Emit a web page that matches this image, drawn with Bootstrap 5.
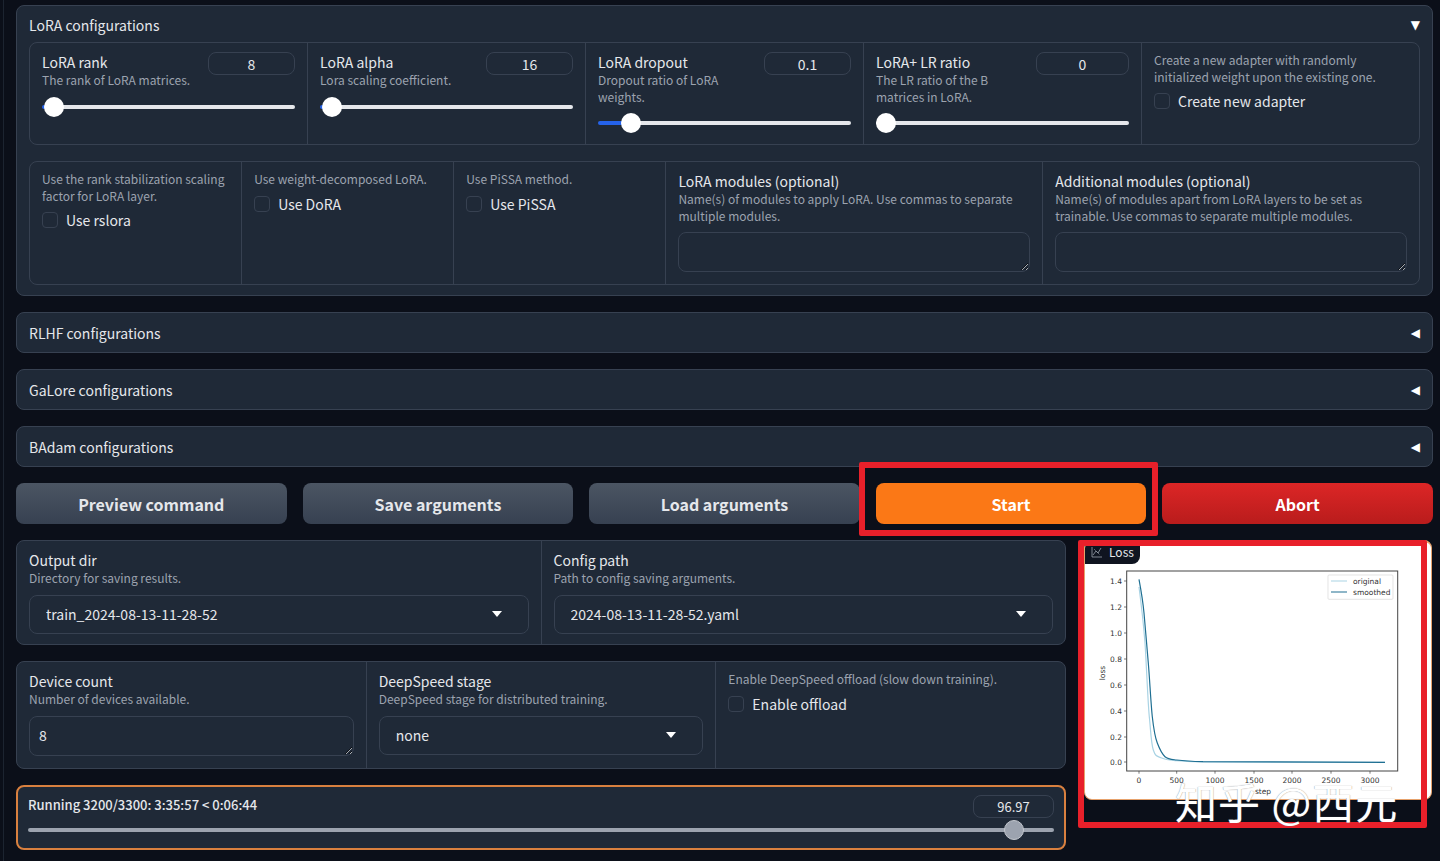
<!doctype html>
<html lang="en">
<head>
<meta charset="utf-8">
<title>LoRA training</title>
<link href="https://cdn.jsdelivr.net/npm/bootstrap@5.3.0/dist/css/bootstrap.min.css" rel="stylesheet">
<style>
html,body{height:861px;overflow:hidden}
body{background:#0b0f19;color:#e5e7eb;font-family:"Noto Sans CJK SC","Noto Sans",sans-serif;font-size:14px;line-height:20px}
.ui-shell{position:relative;height:861px;margin-left:3px;border-left:1px solid #1c2430;padding:5px 7px 0 12px;display:flex;flex-direction:column;gap:16px}
.ui-panel{background:#1f2937;border:1px solid #374151;border-radius:8px}
.ui-acc{padding:9px 12px 10px}
.ui-acc-head{display:flex;justify-content:space-between;align-items:center;height:20px;color:#e5e7eb}
.ui-acc-h40{height:41px;padding:10px 12px}
.ui-arrow{color:#fff;font-size:12px;line-height:20px;font-family:"DejaVu Sans",sans-serif}
.ui-grp{border:1px solid #374151;border-radius:8px;display:flex;overflow:hidden}
.ui-grp1{height:103px;margin-top:7px}
.ui-grp2{height:124px;margin-top:16px}
.ui-cell{flex:1 1 0;min-width:0;padding:9px 12px 0;border-left:1px solid #374151}
.ui-cell:first-child{border-left:0}
.ui-wide{flex:1.88 1 0}
.ui-lab{display:block;color:#e5e7eb;line-height:20px}
.ui-info{display:block;color:#9ca3af;font-size:12px;line-height:16.5px}
.ui-num{display:block;height:23px;background:transparent;border:1px solid #374151;border-radius:8px;color:#e5e7eb;font-size:14px;text-align:center;padding:0;box-shadow:none}
.ui-numw{width:87px;flex:none}
.ui-numw2{width:93px;flex:none}
.ui-range{display:block;width:100%;height:20px;margin:0;padding:0;background:transparent;-webkit-appearance:none;appearance:none}
.ui-range::-webkit-slider-runnable-track{height:4px;border-radius:2px;background:linear-gradient(90deg,#2563eb var(--f),#e5e7eb var(--f))}
.ui-range::-webkit-slider-thumb{-webkit-appearance:none;width:20px;height:20px;margin-top:-8px;border-radius:50%;background:#fff;border:0}
.ui-range-grey::-webkit-slider-runnable-track{background:#9ca3af}
.ui-range-grey::-webkit-slider-thumb{background:#9ca3af;border:1px solid #c3c7ce}
.ui-check{display:flex;align-items:center;gap:8px;color:#e5e7eb;margin-top:6px;line-height:20px}
.ui-check .form-check-input{width:16px;height:16px;margin:0;background-color:transparent;border:1px solid #374151;border-radius:4px;box-shadow:none}
.ui-text{background:#1f2937;border:1px solid #374151;border-radius:8px;color:#e5e7eb;font-size:14px;padding:8px 9px;box-shadow:none;height:40px;min-height:0}
.ui-text:focus{background:#1f2937;color:#e5e7eb;border-color:#374151;box-shadow:none}
.ui-sel{height:39px;background-color:#1f2937;border:1px solid #374151;border-radius:8px;color:#e5e7eb;font-size:14px;padding:0 40px 0 16px;box-shadow:none;background-size:10px 6px;background-position:right 26px center;background-image:url("data:image/svg+xml,%3Csvg xmlns='http://www.w3.org/2000/svg' viewBox='0 0 10 6'%3E%3Cpath fill='%23fff' d='M0 0h10L5 6z'/%3E%3C/svg%3E")}
.ui-btn{flex:1 1 0;height:41px;border:0;border-radius:8px;font-size:16px;font-weight:600;color:#e5e7eb;padding:0;background:linear-gradient(180deg,#4b5563,#374151)}
.ui-btn:hover{color:#e5e7eb;background:linear-gradient(180deg,#4b5563,#374151)}
.ui-btn-go{background:#fb7816;color:#fff}
.ui-btn-go:hover{background:#fb7816;color:#fff}
.ui-btn-stop{background:linear-gradient(180deg,#dc2626,#b91c1c);color:#fff}
.ui-btn-stop:hover{background:linear-gradient(180deg,#dc2626,#b91c1c);color:#fff}
.ui-left{width:1050px;flex:none;display:flex;flex-direction:column;gap:16px}
.ui-bottom{display:flex;gap:18px}
.ui-h105{height:105px}
.ui-h108{height:108px}
.ui-prog{height:65px;border:2px solid #d9803f;padding:6px 10px 0}
.ui-prog-title{font-size:13px;font-weight:500;line-height:24px;color:#e5e7eb}
.ui-prog-num{width:81px;height:23px;flex:none;font-size:13px;margin-top:2px}
.ui-prog-range{margin-top:2px}
.ui-plot{position:relative;width:348px;height:260px;background:#fff;border:1px solid #e7a26c;border-top-width:2px;border-radius:8px;overflow:hidden}
.ui-plot svg{display:block;position:absolute;left:-1px;top:-2px}
.ui-plottab{position:absolute;left:-1px;top:-2px;width:56px;height:24px;background:#0f1420;border-bottom-right-radius:8px;color:#e5e7eb;font-size:12px;line-height:24px;padding-left:25px}
.ui-plottab svg{left:7px;top:6px}
.ui-redbox{position:absolute;border:6px solid #e8202a;border-radius:2px;pointer-events:none}
.ui-red1{left:855px;top:462px;width:299px;height:74px}
.ui-red2{left:1074px;top:540px;width:349px;height:288px}
.ui-wm{position:absolute;left:1171px;top:775px;color:#fff;font-size:42px;line-height:52px;white-space:nowrap;font-family:"Noto Sans CJK SC",sans-serif;letter-spacing:1px;text-shadow:0 0 1px #777;pointer-events:none}
</style>
</head>
<body>
<div class="ui-shell">

  <section class="ui-panel ui-acc">
    <div class="ui-acc-head"><span>LoRA configurations</span><span class="ui-arrow">▼</span></div>
    <div class="ui-grp ui-grp1">
      <div class="ui-cell">
        <div class="d-flex justify-content-between align-items-start">
          <div><span class="ui-lab">LoRA rank</span><span class="ui-info">The rank of LoRA matrices.</span></div>
          <input class="form-control ui-num ui-numw" value="8" aria-label="LoRA rank">
        </div>
        <input type="range" class="ui-range mt-2" min="1" max="1024" value="8" style="--f:1%" aria-label="LoRA rank slider">
      </div>
      <div class="ui-cell">
        <div class="d-flex justify-content-between align-items-start">
          <div><span class="ui-lab">LoRA alpha</span><span class="ui-info">Lora scaling coefficient.</span></div>
          <input class="form-control ui-num ui-numw" value="16" aria-label="LoRA alpha">
        </div>
        <input type="range" class="ui-range mt-2" min="0" max="2048" value="16" style="--f:1%" aria-label="LoRA alpha slider">
      </div>
      <div class="ui-cell">
        <div class="d-flex justify-content-between align-items-start">
          <div><span class="ui-lab">LoRA dropout</span><span class="ui-info">Dropout ratio of LoRA weights.</span></div>
          <input class="form-control ui-num ui-numw" value="0.1" aria-label="LoRA dropout">
        </div>
        <input type="range" class="ui-range mt-2" min="0" max="1" step="0.01" value="0.1" style="--f:10%" aria-label="LoRA dropout slider">
      </div>
      <div class="ui-cell">
        <div class="d-flex justify-content-between align-items-start gap-1">
          <div><span class="ui-lab">LoRA+ LR ratio</span><span class="ui-info">The LR ratio of the B matrices in LoRA.</span></div>
          <input class="form-control ui-num ui-numw2" value="0" aria-label="LoRA+ LR ratio">
        </div>
        <input type="range" class="ui-range mt-2" min="0" max="64" value="0" style="--f:0%" aria-label="LoRA+ LR ratio slider">
      </div>
      <div class="ui-cell">
        <span class="ui-info">Create a new adapter with randomly initialized weight upon the existing one.</span>
        <label class="ui-check"><input class="form-check-input" type="checkbox">Create new adapter</label>
      </div>
    </div>
    <div class="ui-grp ui-grp2">
      <div class="ui-cell">
        <span class="ui-info">Use the rank stabilization scaling factor for LoRA layer.</span>
        <label class="ui-check"><input class="form-check-input" type="checkbox">Use rslora</label>
      </div>
      <div class="ui-cell">
        <span class="ui-info">Use weight-decomposed LoRA.</span>
        <label class="ui-check"><input class="form-check-input" type="checkbox">Use DoRA</label>
      </div>
      <div class="ui-cell">
        <span class="ui-info">Use PiSSA method.</span>
        <label class="ui-check"><input class="form-check-input" type="checkbox">Use PiSSA</label>
      </div>
      <div class="ui-cell ui-wide">
        <span class="ui-lab">LoRA modules (optional)</span>
        <span class="ui-info">Name(s) of modules to apply LoRA. Use commas to separate multiple modules.</span>
        <textarea class="form-control ui-text mt-2" aria-label="LoRA modules"></textarea>
      </div>
      <div class="ui-cell ui-wide">
        <span class="ui-lab">Additional modules (optional)</span>
        <span class="ui-info">Name(s) of modules apart from LoRA layers to be set as trainable. Use commas to separate multiple modules.</span>
        <textarea class="form-control ui-text mt-2" aria-label="Additional modules"></textarea>
      </div>
    </div>
  </section>

  <section class="ui-panel ui-acc-h40 ui-acc-head"><span>RLHF configurations</span><span class="ui-arrow">◀</span></section>
  <section class="ui-panel ui-acc-h40 ui-acc-head"><span>GaLore configurations</span><span class="ui-arrow">◀</span></section>
  <section class="ui-panel ui-acc-h40 ui-acc-head"><span>BAdam configurations</span><span class="ui-arrow">◀</span></section>

  <div class="d-flex gap-3">
    <button class="btn ui-btn" type="button">Preview command</button>
    <button class="btn ui-btn" type="button">Save arguments</button>
    <button class="btn ui-btn" type="button">Load arguments</button>
    <button class="btn ui-btn ui-btn-go" type="button">Start</button>
    <button class="btn ui-btn ui-btn-stop" type="button">Abort</button>
  </div>

  <div class="ui-bottom">
    <div class="ui-left">
      <div class="ui-panel ui-grp ui-h105">
        <div class="ui-cell">
          <span class="ui-lab">Output dir</span>
          <span class="ui-info">Directory for saving results.</span>
          <select class="form-select ui-sel mt-2" aria-label="Output dir"><option>train_2024-08-13-11-28-52</option></select>
        </div>
        <div class="ui-cell">
          <span class="ui-lab">Config path</span>
          <span class="ui-info">Path to config saving arguments.</span>
          <select class="form-select ui-sel mt-2" aria-label="Config path"><option>2024-08-13-11-28-52.yaml</option></select>
        </div>
      </div>
      <div class="ui-panel ui-grp ui-h108">
        <div class="ui-cell">
          <span class="ui-lab">Device count</span>
          <span class="ui-info">Number of devices available.</span>
          <textarea class="form-control ui-text mt-2" aria-label="Device count">8</textarea>
        </div>
        <div class="ui-cell">
          <span class="ui-lab">DeepSpeed stage</span>
          <span class="ui-info">DeepSpeed stage for distributed training.</span>
          <select class="form-select ui-sel mt-2" aria-label="DeepSpeed stage"><option>none</option></select>
        </div>
        <div class="ui-cell">
          <span class="ui-info">Enable DeepSpeed offload (slow down training).</span>
          <label class="ui-check"><input class="form-check-input" type="checkbox">Enable offload</label>
        </div>
      </div>
      <div class="ui-panel ui-prog">
        <div class="d-flex justify-content-between align-items-start">
          <span class="ui-prog-title">Running 3200/3300: 3:35:57 &lt; 0:06:44</span>
          <input class="form-control ui-num ui-prog-num" value="96.97" aria-label="Progress">
        </div>
        <input type="range" class="ui-range ui-range-grey ui-prog-range" min="0" max="100" step="0.01" value="96.97" aria-label="Progress slider">
      </div>
    </div>

    <div class="ui-plot">
      <svg width="348" height="260" viewBox="0 0 348 260" role="img" aria-label="Loss plot" font-family="DejaVu Sans, sans-serif" font-size="7.5" fill="#333">
        <rect x="42.7" y="31" width="271" height="200" fill="none" stroke="#444" stroke-width="1"/>
        <g stroke="#444" stroke-width=".7">
          <path d="M40 41h2.700M40 67h2.700M40 93h2.700M40 119h2.700M40 145h2.700M40 171h2.700M40 197h2.700M40 222h2.700"/>
          <path d="M55 231v2.700M92.700 231v2.700M131 231v2.700M170 231v2.700M208 231v2.700M247 231v2.700M286 231v2.700"/>
        </g>
        <g text-anchor="end">
          <text x="38" y="44">1.4</text><text x="38" y="70">1.2</text><text x="38" y="96">1.0</text><text x="38" y="122">0.8</text><text x="38" y="148">0.6</text><text x="38" y="174">0.4</text><text x="38" y="200">0.2</text><text x="38" y="225">0.0</text>
        </g>
        <g text-anchor="middle">
          <text x="55" y="243">0</text><text x="92.700" y="243">500</text><text x="131" y="243">1000</text><text x="170" y="243">1500</text><text x="208" y="243">2000</text><text x="247" y="243">2500</text><text x="286" y="243">3000</text>
          <text x="179" y="254">step</text>
          <text transform="translate(21 133) rotate(-90)">loss</text>
        </g>
        <path fill="none" stroke="#a9d3e4" stroke-width="1.200" d="M55 47C58 70 60 90 61 103S64 165 65.300 176.700 67 203 69.300 210 73 216 77.700 218 86 220 92.700 220.700 105 221.600 119 222L301 222.300"/>
        <path fill="none" stroke="#1f6f92" stroke-width="1.200" d="M55 39.300C57 50 59 62 60 73S63 108 64.300 123 67 165 68.300 176.700 71 197 73.300 203 78 214 81 216.700 88 219.400 92.700 220 108 221.400 119 221.700L301 222.300"/>
        <rect x="244" y="35" width="65" height="24.300" fill="#fff" stroke="#d9d9d9" stroke-width=".7" rx="1"/>
        <path d="M247 41h16" stroke="#a9d3e4" stroke-width="1.200"/>
        <path d="M247 52h16" stroke="#1f6f92" stroke-width="1.200"/>
        <text x="269" y="43.500">original</text>
        <text x="269" y="55">smoothed</text>
      </svg>
      <div class="ui-plottab">
        <svg width="12" height="12" viewBox="0 0 12 12" fill="none" stroke="#9ca3af" stroke-width=".8"><path d="M1 1v10h10"/><path d="M2 9 5 5l2 2 3-5"/><path d="M3 3l6 6" stroke-dasharray="1 1"/></svg>
        Loss
      </div>
    </div>
  </div>

  <div class="ui-redbox ui-red1"></div>
  <div class="ui-redbox ui-red2"></div>
  <div class="ui-wm">知乎 @西元</div>
</div>
</body>
</html>
